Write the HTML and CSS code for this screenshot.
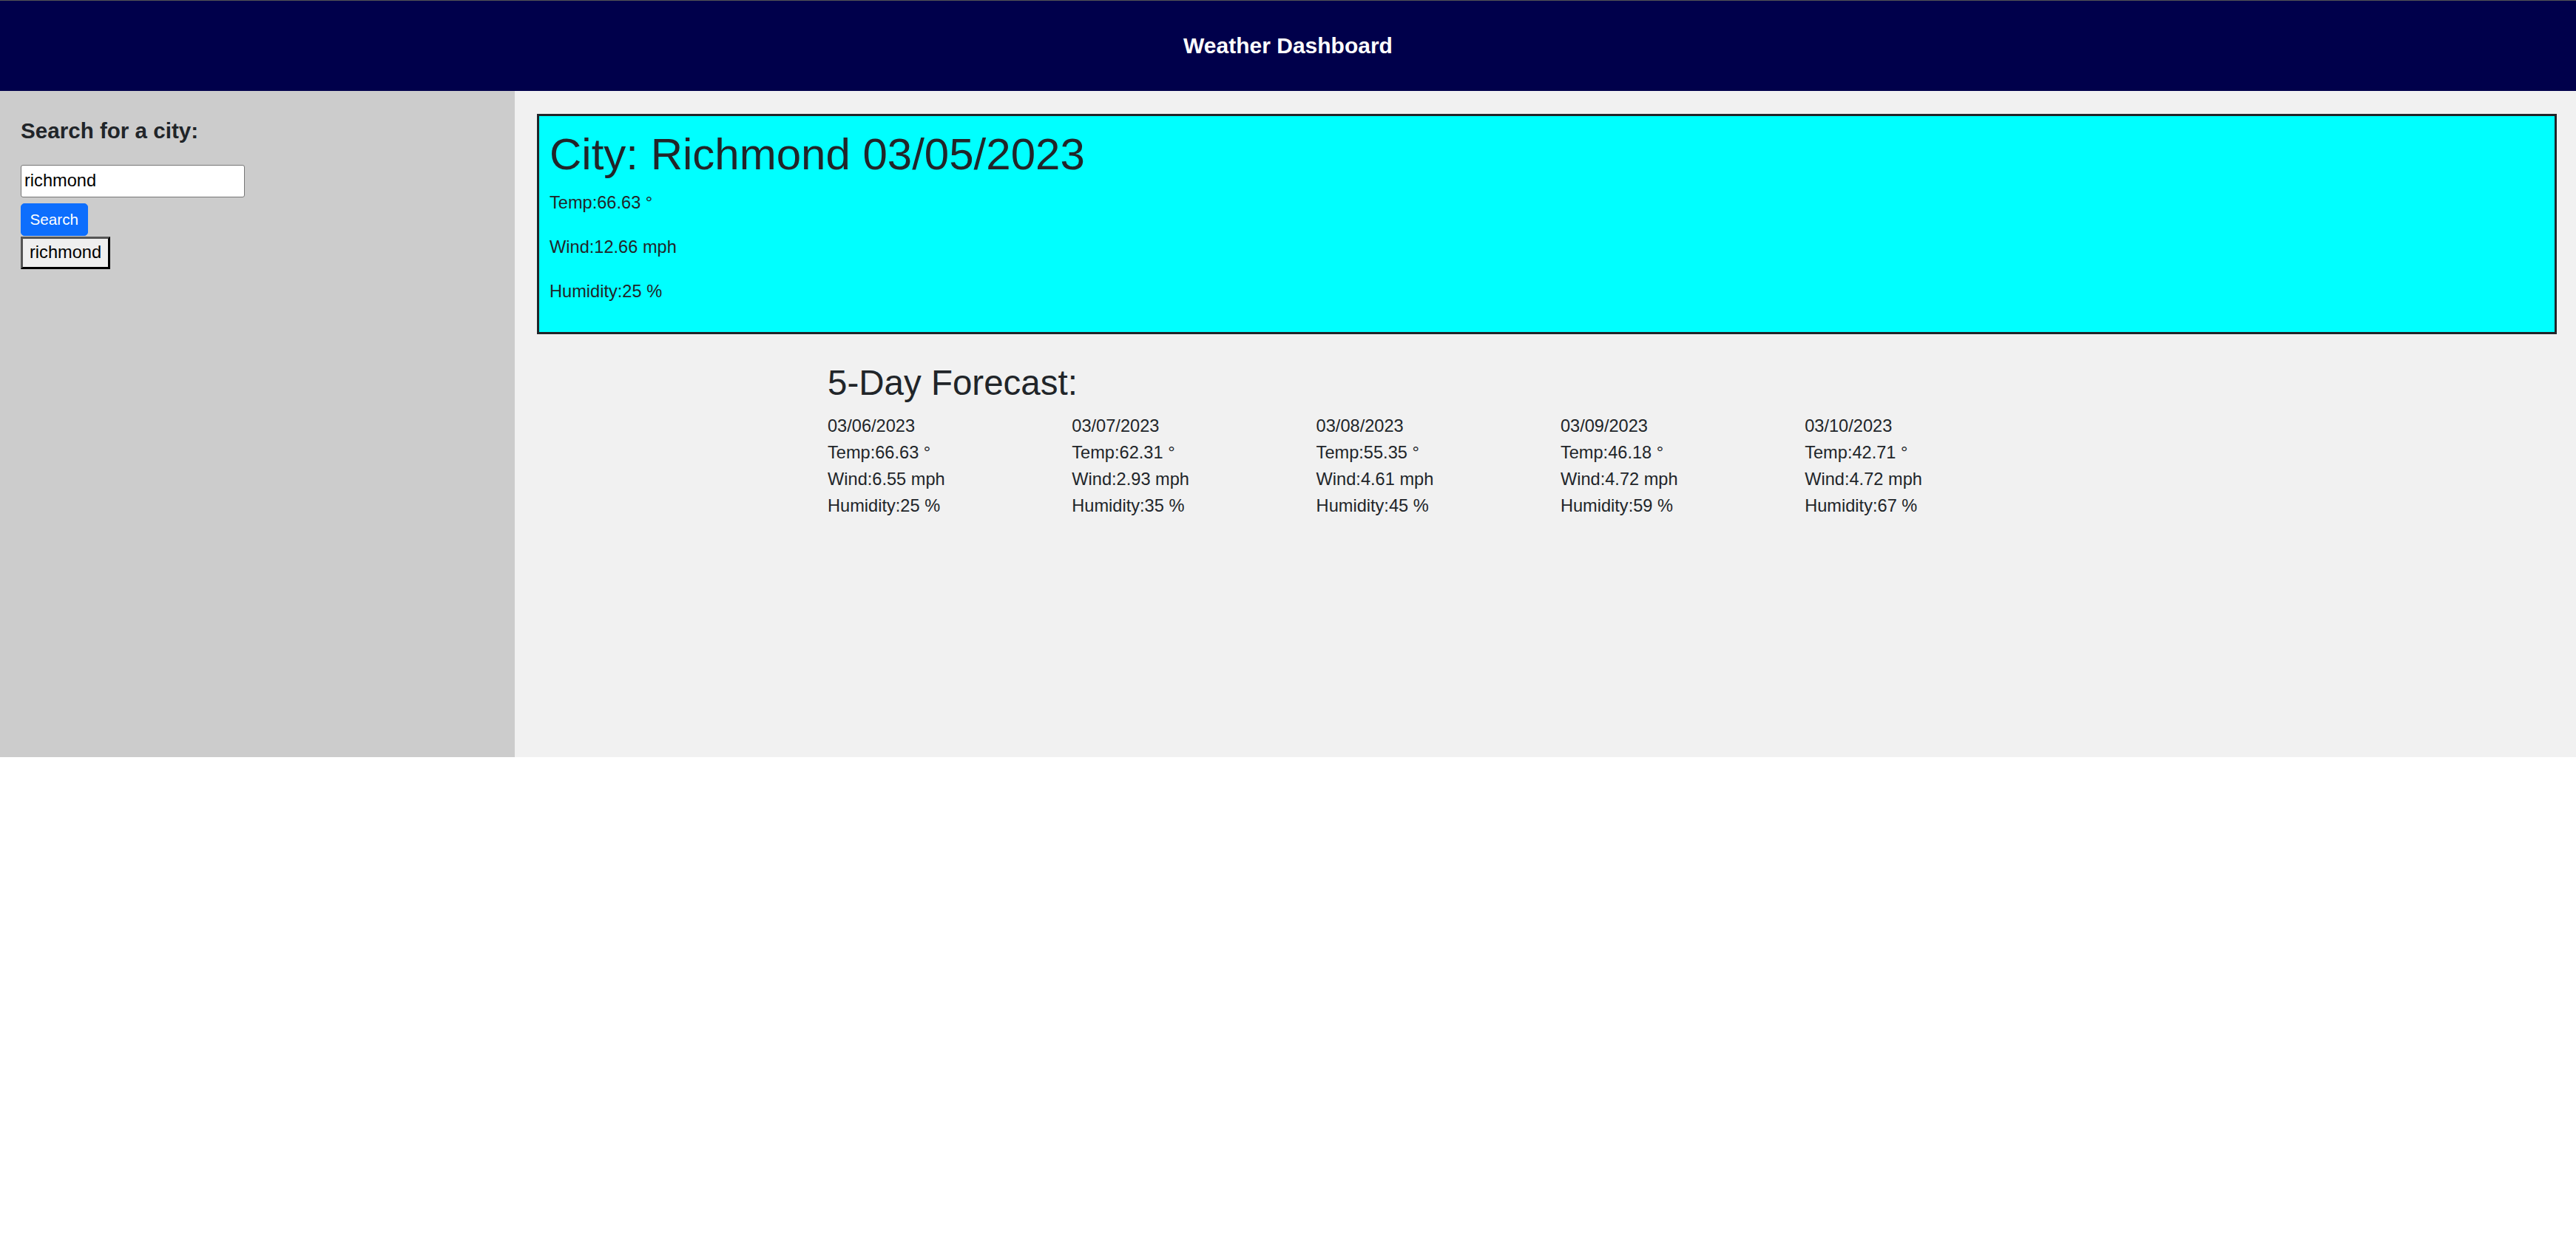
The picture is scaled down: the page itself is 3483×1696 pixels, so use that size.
FILE: index.html
```html
<!DOCTYPE html>
<html lang="en">
<head>
    <meta charset="UTF-8">
    <meta name="viewport" content="width=device-width, initial-scale=1.0">
    <title>Weather Dashboard</title>
    <link rel="stylesheet" href="styles.css">
</head>
<body>
    <header class="top-bar">
        <h1>Weather Dashboard</h1>
    </header>

    <div class="layout">
        <aside class="sidebar">
            <h2 class="search-title">Search for a city:</h2>
            <input type="text" class="city-input" id="cityInput" value="richmond">
            <button class="search-btn" id="searchBtn">Search</button>
            <div class="history" id="history">
                <button class="history-btn">richmond</button>
            </div>
        </aside>

        <main class="content">
            <section class="current" id="current">
                <h2>City: Richmond 03/05/2023</h2>
                <p>Temp:66.63 °</p>
                <p>Wind:12.66 mph</p>
                <p>Humidity:25 %</p>
            </section>

            <section class="forecast">
                <h2>5-Day Forecast:</h2>
                <div class="forecast-row" id="forecast">
                    <div class="day">
                        <div>03/06/2023</div>
                        <div>Temp:66.63 °</div>
                        <div>Wind:6.55 mph</div>
                        <div>Humidity:25 %</div>
                    </div>
                    <div class="day">
                        <div>03/07/2023</div>
                        <div>Temp:62.31 °</div>
                        <div>Wind:2.93 mph</div>
                        <div>Humidity:35 %</div>
                    </div>
                    <div class="day">
                        <div>03/08/2023</div>
                        <div>Temp:55.35 °</div>
                        <div>Wind:4.61 mph</div>
                        <div>Humidity:45 %</div>
                    </div>
                    <div class="day">
                        <div>03/09/2023</div>
                        <div>Temp:46.18 °</div>
                        <div>Wind:4.72 mph</div>
                        <div>Humidity:59 %</div>
                    </div>
                    <div class="day">
                        <div>03/10/2023</div>
                        <div>Temp:42.71 °</div>
                        <div>Wind:4.72 mph</div>
                        <div>Humidity:67 %</div>
                    </div>
                </div>
            </section>
        </main>
    </div>
</body>
</html>
```

FILE: styles.css
```css
body {
    margin: 0;
    font-family: "Liberation Sans", Arial, sans-serif;
    font-size: 23.6px;
    line-height: 36px;
    color: #212529;
    background-color: #fff;
}
h1, h2, p {
    margin: 0;
}
.top-bar {
    height: 122px;
    border-top: 1px solid #555;
    background-color: #00004b;
    display: flex;
    align-items: center;
    justify-content: center;
}
.top-bar h1 {
    color: #fff;
    font-size: 30px;
    font-weight: bold;
    line-height: 1.2;
}
.layout {
    display: flex;
    height: 901px;
}
.sidebar {
    width: 696px;
    flex-shrink: 0;
    background-color: #cccccc;
    padding: 36px 0 0 28px;
    box-sizing: border-box;
    display: flex;
    flex-direction: column;
    align-items: flex-start;
}
.search-title {
    font-size: 29.6px;
    font-weight: bold;
    line-height: 1.2;
    margin-bottom: 28px;
}
.city-input {
    width: 303px;
    height: 44px;
    box-sizing: border-box;
    padding: 0 4px;
    border: 1px solid #767676;
    border-radius: 3px;
    font-family: inherit;
    font-size: 23.6px;
    color: #000;
    background-color: #fff;
    margin: 0 0 8px;
}
.search-btn {
    background-color: #0d6efd;
    color: #fff;
    border: 1px solid #0d6efd;
    border-radius: 5px;
    padding: 5.5px 11.5px;
    font-family: inherit;
    font-size: 20.7px;
    line-height: 1.5;
    cursor: pointer;
}
.search-btn:hover {
    background-color: #0b5ed7;
}
.history {
    display: flex;
    flex-direction: column;
    align-items: flex-start;
    margin-top: 1px;
}
.history-btn {
    background-color: #efefef;
    color: #000;
    border: 3px solid;
    border-color: #555 #000 #000 #555;
    padding: 1.5px 9px;
    font-family: inherit;
    font-size: 23.6px;
    line-height: 35.4px;
    cursor: pointer;
}
.content {
    flex: 1;
    background-color: #f1f1f1;
    padding: 31px 26px 0 30px;
}
.current {
    background-color: #00ffff;
    border: 3px solid #212529;
    padding: 16px 14px 13px;
}
.current h2 {
    font-size: 60px;
    font-weight: normal;
    line-height: 1.2;
    margin-bottom: 11px;
}
.current p {
    margin-bottom: 24px;
}
.forecast {
    margin: 37px 0 0 393px;
}
.forecast h2 {
    font-size: 47.5px;
    font-weight: normal;
    line-height: 1.2;
    margin-bottom: 11.8px;
}
.forecast-row {
    display: flex;
}
.day {
    width: 330.3px;
}
```
